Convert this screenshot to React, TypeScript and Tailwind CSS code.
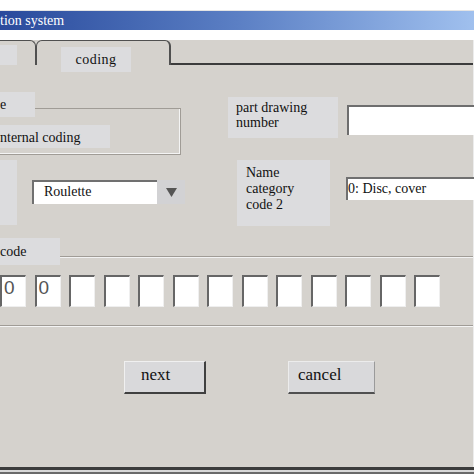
const codeValues = ['0', '0', '', '', '', '', '', '', '', '', '', '', ''];

function Label({ className, children }: { className: string; children?: React.ReactNode }) {
  return <div className={`bg-[#dcdcde] text-[14px] text-[#111] ${className}`}>{children}</div>;
}

function TabRow() {
  return (
    <div className="mt-[10px] flex h-[25px] items-stretch">
      <div className="w-[36px] shrink-0 rounded-tr-[6px] border-t border-r border-[#505050]">
        <div className="mt-[4px] h-[20px] w-[17px] bg-[#dcdcde]" />
      </div>
      <div className="w-[135px] shrink-0 rounded-t-[6px] border-t border-r-2 border-l border-[#505050]">
        <Label className="ml-[24px] mt-[6px] flex h-[25px] w-[70px] items-center justify-center pb-[1px] tracking-[0.5px]">coding</Label>
      </div>
      <div className="flex-1 border-b-2 border-[#3c3c3c]" />
    </div>
  );
}

function Combo({ text, button, className }: { text: string; button?: boolean; className: string }) {
  return (
    <div className="flex h-full">
      <div className={`flex flex-1 items-center border-t-2 border-l-2 border-[#707070] bg-white text-[14px] text-[#111] ${className}`}>
        {text}
      </div>
      {button && (
        <div className="flex w-[28px] items-center justify-center bg-[#d2d2d4]">
          <svg width="11" height="9" viewBox="0 0 11 9">
            <path d="M0 0 L11 0 L5.5 9 Z" fill="#555" />
          </svg>
        </div>
      )}
    </div>
  );
}

export default function App() {
  return (
    <div className="h-[474px] w-[474px] overflow-hidden bg-white" style={{ fontFamily: '"Liberation Serif", "Times New Roman", serif' }}>
      <div className="h-[11px] border-b border-[#e4e4e4]" />
      <div className="flex h-[19px] items-center bg-gradient-to-r from-[#2a4a9c] via-[#5b7fc4] to-[#a0c0ee] text-[14px] text-white">
        tion system
      </div>

      <div className="h-[427px] border-r border-[#ececec] bg-[#d5d2cd]">
        <TabRow />

        {/* type group + part drawing number */}
        <div className="mt-[27px] flex h-[63px] items-start">
          <div className="mt-[16px] h-[47px] w-[181px] shrink-0 border-t border-r border-b border-[#a09c96] shadow-[inset_-1px_-1px_0_#f4f4f4]">
            <Label className="-mt-[17px] flex h-[25px] w-[35px] items-center">e</Label>
            <Label className="mt-[8px] flex h-[23px] w-[110px] items-center pt-[1px]">nternal coding</Label>
          </div>
          <Label className="mt-[5px] ml-[47px] h-[41px] w-[110px] shrink-0 pt-[3px] pl-[8px] leading-[15px]">
            part drawing
            <br />
            number
          </Label>
          <div className="mt-[13px] ml-[9px] h-[30px] w-[130px] shrink-0 border-t-2 border-l-2 border-[#6e6e6e] bg-white" />
        </div>

        {/* roulette + name category */}
        <div className="mt-[5px] flex h-[66px] items-start">
          <Label className="h-[65px] w-[17px] shrink-0" />
          <div className="mt-[20px] ml-[15px] h-[24px] w-[153px] shrink-0">
            <Combo text="Roulette" button className="pb-[4px] pl-[10px]" />
          </div>
          <Label className="ml-[52px] h-[66px] w-[93px] shrink-0 pt-[5px] pl-[9px] leading-[16px]">
            Name
            <br />
            category
            <br />
            code 2
          </Label>
          <div className="mt-[17px] ml-[16px] h-[23px] w-[130px] shrink-0">
            <Combo text="0: Disc, cover" className="pb-[2px]" />
          </div>
        </div>

        {/* code */}
        <div className="mt-[12px] flex h-[27px]">
          <Label className="flex h-[27px] w-[60px] shrink-0 items-center">code</Label>
          <div className="mt-[18px] h-[2px] flex-1 border-t border-b border-t-[#a09c96] border-b-[#f2f2f2]" />
        </div>

        <div className="mt-[10px] flex gap-[8.5px]">
          {codeValues.map((v, i) => (
            <div
              key={i}
              className="h-[32px] w-[26px] shrink-0 border-t-2 border-l-2 border-r border-b border-t-[#666] border-l-[#666] border-r-[#efefef] border-b-[#efefef] bg-white pt-[1px] pl-[2px] text-[19px] leading-[20px] text-[#555]"
              style={{ fontFamily: '"Liberation Sans Narrow", "Liberation Sans", Arial, sans-serif' }}
            >
              {v}
            </div>
          ))}
        </div>

        <div className="mt-[18px] h-[2px] border-t border-b border-t-[#a09c96] border-b-[#f4f4f4]" />

        <div className="mt-[34px] flex text-[17px] text-[#111]">
          <button className="ml-[124px] flex h-[33px] w-[82px] items-center border-t border-l border-r-2 border-b-2 border-t-[#f0f0f0] border-l-[#f0f0f0] border-r-[#404040] border-b-[#404040] bg-[#d9d9db] pb-[4px] pl-[16px]">
            next
          </button>
          <button className="ml-[82px] flex h-[33px] w-[87px] items-center border-t border-l border-r border-b-2 border-t-[#ececec] border-l-[#ececec] border-r-[#9a9a9a] border-b-[#505050] bg-[#d9d9db] pb-[4px] pl-[9px]">
            cancel
          </button>
        </div>
      </div>

      <div className="h-[3px] bg-[#3c3c3c]" />
      <div className="h-[2px] bg-[#d8d8d8]" />
      <div className="h-[2px] bg-[#6a6a6a]" />
    </div>
  );
}
